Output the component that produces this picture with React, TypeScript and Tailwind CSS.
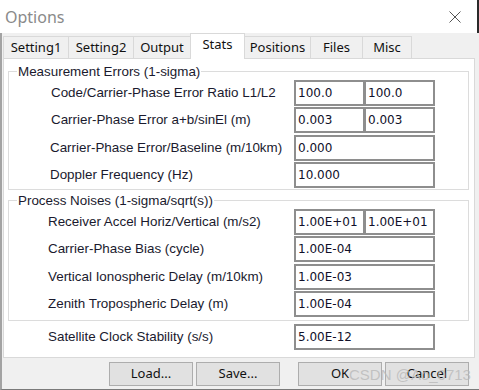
import React from "react";

type Row = { label: string; values: string[]; indent: number; mt: number };

const measurement: Row[] = [
  { label: "Code/Carrier-Phase Error Ratio L1/L2", values: ["100.0", "100.0"], indent: 42, mt: 1 },
  { label: "Carrier-Phase Error a+b/sinEl (m)", values: ["0.003", "0.003"], indent: 42, mt: 1 },
  { label: "Carrier-Phase Error/Baseline (m/10km)", values: ["0.000"], indent: 41, mt: 2 },
  { label: "Doppler Frequency (Hz)", values: ["10.000"], indent: 41, mt: 1 },
];

const noises: Row[] = [
  { label: "Receiver Accel Horiz/Vertical (m/s2)", values: ["1.00E+01", "1.00E+01"], indent: 39, mt: 1 },
  { label: "Carrier-Phase Bias (cycle)", values: ["1.00E-04"], indent: 39, mt: 1 },
  { label: "Vertical Ionospheric Delay (m/10km)", values: ["1.00E-03"], indent: 39, mt: 2 },
  { label: "Zenith Tropospheric Delay (m)", values: ["1.00E-04"], indent: 39, mt: 1 },
];

const tabs = ["Setting1", "Setting2", "Output", "Stats", "Positions", "Files", "Misc"];
const tabWidths: Record<string, string> = {
  Setting1: "w-[65px]",
  Setting2: "w-[65px]",
  Output: "w-[57px]",
  Stats: "w-[55px]",
  Positions: "w-[66px]",
  Files: "w-[52px]",
  Misc: "w-[50px]",
};

function Field({ value, wide }: { value: string; wide?: boolean }) {
  return (
    <div
      className={`${wide ? "w-[141px]" : "w-[71px]"} shrink-0 h-[26px] border-2 border-[#8e8e8e] bg-white flex items-center pl-[2px] text-[12px] text-[#10102a] font-['DejaVu_Sans',sans-serif]`}
    >
      {value}
    </div>
  );
}

function FieldRow({ row }: { row: Row }) {
  return (
    <div className="flex items-center h-[26px]" style={{ marginTop: row.mt, paddingLeft: row.indent }}>
      <div className="flex-1 text-[13.4px] text-[#1a1a2e]">{row.label}</div>
      {row.values.length === 2 ? (
        <div className="flex shrink-0 w-[141px] mr-[33px]">
          <Field value={row.values[0]} />
          <div className="-ml-px">
            <Field value={row.values[1]} />
          </div>
        </div>
      ) : (
        <div className="shrink-0 mr-[33px]">
          <Field value={row.values[0]} wide />
        </div>
      )}
    </div>
  );
}

function Group({ title, rows, className }: { title: string; rows: Row[]; className: string }) {
  return (
    <fieldset className={`ml-[4px] w-[461px] border border-[#dcdcdc] ${className}`}>
      <legend className="ml-[8px] px-[1px] leading-[15px] text-[13.4px] text-[#1a1a2e]">{title}</legend>
      <div className="flex flex-col">
        {rows.map((r) => (
          <FieldRow key={r.label} row={r} />
        ))}
      </div>
    </fieldset>
  );
}

export default function App() {
  return (
    <div className="w-[479px] h-[390px] flex flex-col bg-[#f0f0f0] overflow-hidden relative font-['Liberation_Sans',Arial,sans-serif]">
      {/* title bar */}
      <div className="h-[33px] bg-white flex items-center justify-between pl-[5px] pr-[16px] border-r-2 border-[#2a2a2a]">
        <span className="text-[16px] text-[#8a8a8a] font-['Noto_Sans',sans-serif]">Options</span>
        <svg width="12" height="12" viewBox="0 0 12 12" className="mt-[1px]">
          <path d="M0.5 0.5 L11.5 11.5 M11.5 0.5 L0.5 11.5" stroke="#555" strokeWidth="1" />
        </svg>
      </div>

      <div className="flex-1 flex flex-col border-l-2 border-[#a3a3a3] border-b border-b-[#7a7a7a]">
        {/* tabs */}
        <div className="h-[25px] flex items-end pl-[1px]">
          {tabs.map((t, i) => {
            const active = t === "Stats";
            return (
              <div
                key={t}
                className={`${tabWidths[t]} flex items-center justify-center text-[13px] text-[#111] font-['Noto_Sans',sans-serif] border-t border-l border-[#d9d9d9] ${
                  i === tabs.length - 1 || active ? "border-r" : ""
                } ${active ? "h-[26px] bg-white -mb-px z-10 pb-[4px] -mr-px" : "h-[22px] bg-[#f0f0f0]"}`}
              >
                {t}
              </div>
            );
          })}
        </div>

        {/* page */}
        <div className="ml-[1px] w-[472px] h-[300px] bg-white border border-[#d9d9d9] flex flex-col">
          <Group title="Measurement Errors (1-sigma)" rows={measurement} className="mt-[5px] pb-[1px]" />
          <Group title="Process Noises (1-sigma/sqrt(s))" rows={noises} className="mt-[3px] pb-[3px]" />
          <div className="flex items-center h-[26px] mt-[3px] pl-[44px]">
            <div className="flex-1 text-[13.4px] text-[#1a1a2e]">Satellite Clock Stability (s/s)</div>
            <div className="shrink-0 mr-[39px]">
              <Field value="5.00E-12" wide />
            </div>
          </div>
        </div>

        {/* buttons */}
        <div className="flex mt-[4px] pl-[107px] text-[13px] text-[#111] font-['Noto_Sans',sans-serif]">
          <button className="w-[84px] h-[24px] bg-[#e1e1e1] border border-[#adadad]">Load...</button>
          <button className="w-[84px] h-[24px] bg-[#e1e1e1] border border-[#adadad] ml-[3px]">Save...</button>
          <button className="w-[84px] h-[24px] bg-[#e1e1e1] border border-[#adadad] ml-[18px]">OK</button>
          <button className="w-[84px] h-[24px] bg-[#e1e1e1] border border-[#adadad] ml-[3px]">Cancel</button>
        </div>
      </div>

      <span className="absolute left-[349px] top-[364px] text-[15px] text-[#b9b9b9]/80 font-['Liberation_Sans',sans-serif] pointer-events-none">
        CSDN @Ao_0713
      </span>
    </div>
  );
}
